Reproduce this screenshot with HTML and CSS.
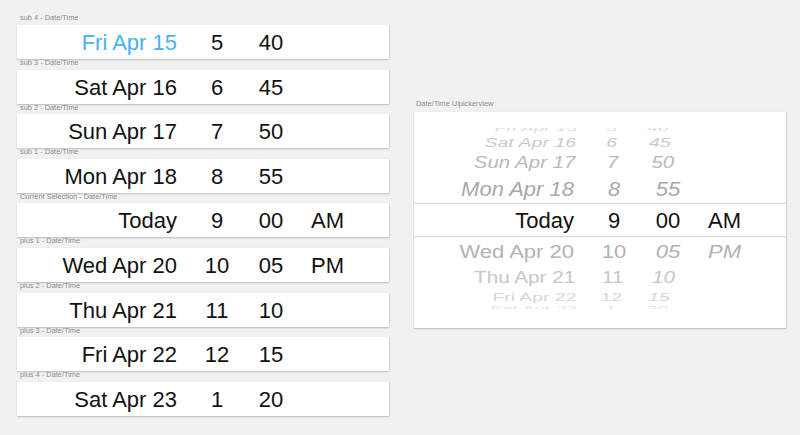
FILE: index.html
```html
<!DOCTYPE html>
<html>
<head>
<meta charset="utf-8">
<link rel="stylesheet" href="styles.css">
</head>
<body>
<div class="page">
  <div class="list">
    <div class="group">
      <div class="label">sub 4 - Date/Time</div>
      <div class="card row"><span class="d blue">Fri Apr 15</span><span class="h">5</span><span class="m">40</span><span class="p"></span></div>
    </div>
    <div class="group">
      <div class="label">sub 3 - Date/Time</div>
      <div class="card row"><span class="d">Sat Apr 16</span><span class="h">6</span><span class="m">45</span><span class="p"></span></div>
    </div>
    <div class="group">
      <div class="label">sub 2 - Date/Time</div>
      <div class="card row"><span class="d">Sun Apr 17</span><span class="h">7</span><span class="m">50</span><span class="p"></span></div>
    </div>
    <div class="group">
      <div class="label">sub 1 - Date/Time</div>
      <div class="card row"><span class="d">Mon Apr 18</span><span class="h">8</span><span class="m">55</span><span class="p"></span></div>
    </div>
    <div class="group">
      <div class="label">Current Selection - Date/Time</div>
      <div class="card row"><span class="d">Today</span><span class="h">9</span><span class="m">00</span><span class="p">AM</span></div>
    </div>
    <div class="group">
      <div class="label">plus 1 - Date/Time</div>
      <div class="card row"><span class="d">Wed Apr 20</span><span class="h">10</span><span class="m">05</span><span class="p">PM</span></div>
    </div>
    <div class="group">
      <div class="label">plus 2 - Date/Time</div>
      <div class="card row"><span class="d">Thu Apr 21</span><span class="h">11</span><span class="m">10</span><span class="p"></span></div>
    </div>
    <div class="group">
      <div class="label">plus 3 - Date/Time</div>
      <div class="card row"><span class="d">Fri Apr 22</span><span class="h">12</span><span class="m">15</span><span class="p"></span></div>
    </div>
    <div class="group">
      <div class="label">plus 4 - Date/Time</div>
      <div class="card row"><span class="d">Sat Apr 23</span><span class="h">1</span><span class="m">20</span><span class="p"></span></div>
    </div>
  </div>

  <div class="picker-col">
    <div class="label picker-label">Date/Time Ulpickerview</div>
    <div class="picker">
      <div class="wheel">
        <div class="row w w-4 it"><span class="d">Fri Apr 15</span><span class="h">5</span><span class="m">40</span><span class="p"></span></div>
        <div class="row w w-3 it"><span class="d">Sat Apr 16</span><span class="h">6</span><span class="m">45</span><span class="p"></span></div>
        <div class="row w w-2 it"><span class="d">Sun Apr 17</span><span class="h">7</span><span class="m">50</span><span class="p"></span></div>
        <div class="row w w-1 it"><span class="d">Mon Apr 18</span><span class="h">8</span><span class="m">55</span><span class="p"></span></div>
        <div class="row sel"><span class="d">Today</span><span class="h">9</span><span class="m">00</span><span class="p">AM</span></div>
        <div class="row w w1"><span class="d">Wed Apr 20</span><span class="h">10</span><span class="m it">05</span><span class="p it">PM</span></div>
        <div class="row w w2"><span class="d">Thu Apr 21</span><span class="h">11</span><span class="m it">10</span><span class="p"></span></div>
        <div class="row w w3"><span class="d">Fri Apr 22</span><span class="h">12</span><span class="m it">15</span><span class="p"></span></div>
        <div class="row w w4"><span class="d">Sat Apr 23</span><span class="h">1</span><span class="m it">20</span><span class="p"></span></div>
      </div>
    </div>
  </div>
</div>
</body>
</html>
```
FILE: styles.css
```css
html, body {
  margin: 0;
  padding: 0;
  background: #f1f1f1;
  width: 800px;
  height: 435px;
  overflow: hidden;
  font-family: "Liberation Sans", Arial, sans-serif;
}

.page {
  display: flex;
  align-items: flex-start;
  padding-left: 17px;
}

.list {
  width: 372px;
  padding-top: 14.4px;
  display: flex;
  flex-direction: column;
}

.label {
  font-size: 7.4px;
  line-height: 8px;
  height: 8px;
  padding-bottom: 2.6px;
  padding-left: 3px;
  color: #8c8c8c;
  white-space: nowrap;
}

.card {
  background: #ffffff;
  height: 34px;
  box-shadow: 0 1px 1.5px rgba(0, 0, 0, 0.22), 1px 0 1px rgba(0, 0, 0, 0.06);
}

.row {
  display: grid;
  grid-template-columns: 160px 80px 28px auto;
  align-items: center;
  font-size: 22px;
  line-height: 34px;
  color: #111111;
  white-space: nowrap;
}

.card.row {
  line-height: 36px;
}

.row .d { text-align: right; }
.row .h { text-align: center; }
.row .m { text-align: center; }
.row .p { padding-left: 26px; }

.row .blue { color: #45b3f3; }

.picker-col {
  margin-left: 25px;
  width: 372px;
  padding-top: 100px;
}

.picker-label {
  padding-left: 2px;
  padding-bottom: 4px;
}

.picker {
  background: #ffffff;
  height: 216px;
  padding-top: 16px;
  box-sizing: border-box;
  box-shadow: 0 1px 1.5px rgba(0, 0, 0, 0.22), 1px 0 1px rgba(0, 0, 0, 0.06);
}

.wheel {
  height: 181px;
  overflow: hidden;
  display: flex;
  flex-direction: column;
}

.sel {
  height: 34px;
  box-sizing: border-box;
  border-top: 1px solid #d4d4d4;
  border-bottom: 1px solid #d4d4d4;
  line-height: 34px;
  flex: none;
}

.w {
  flex: none;
  overflow: visible;
  transform-origin: 180px 50%;
}

.it { font-style: italic; }

.w-4 { height: 8px; line-height: 8px; margin-top: -3px; color: #dadada; transform: scale(0.86, 0.35); }
.w-3 { height: 19px; line-height: 19px; color: #c9c9c9; transform: scale(0.89, 0.55); }
.w-2 { height: 22px; line-height: 22px; color: #b9b9b9; transform: scale(0.93, 0.78); }
.w-1 { height: 29px; line-height: 29px; color: #a8a8a8; transform: scale(1, 0.95); }

.w1 { height: 30px; line-height: 30px; color: #b2b2b2; transform: scale(1, 0.86); }
.w2 { height: 22px; line-height: 22px; color: #c6c6c6; transform: scale(0.94, 0.74); }
.w3 { height: 16px; line-height: 16px; color: #d6d6d6; transform: scale(0.88, 0.5); }
.w4 { height: 8px; line-height: 8px; color: #e2e2e2; transform: scale(0.85, 0.35); }
```
